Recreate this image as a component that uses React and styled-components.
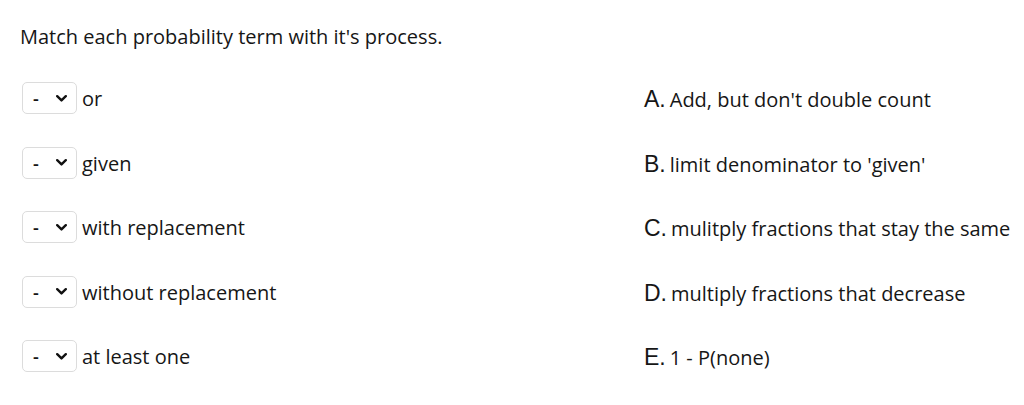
import React from "react";
import styled, { createGlobalStyle } from "styled-components";

const Global = createGlobalStyle`
  html, body { margin: 0; padding: 0; background: #fff; }
  body { font-family: "Open Sans", sans-serif; color: #161616; }
`;

const Page = styled.div`
  padding: 23px 0 0 20px;
`;

const Title = styled.div`
  font-size: 20px;
  line-height: 28px;
  margin-bottom: 31px;
`;

const Grid = styled.div`
  display: grid;
  grid-template-columns: 622px auto;
  grid-auto-rows: 64.5px;
  margin-left: 2px;
`;

const Left = styled.div`
  display: flex;
  align-items: flex-start;
  gap: 5px;
  font-size: 20px;
`;

const SelectBox = styled.div`
  width: 55px;
  height: 32px;
  box-sizing: border-box;
  border: 1px solid #dcdcdc;
  border-radius: 5px;
  display: flex;
  align-items: center;
  justify-content: space-between;
  padding: 0 9px 0 10px;
  font-size: 18px;
`;

const Dash = styled.span`
  font-weight: 600;
  line-height: 1;
`;

const Label = styled.span`
  line-height: 34px;
`;

const Right = styled.div`
  display: flex;
  align-items: baseline;
  gap: 4px;
  font-size: 20px;
  line-height: 32px;
  margin-top: 1px;
`;

const Letter = styled.span`
  font-family: "Liberation Sans", Arial, sans-serif;
  font-size: 23px;
`;

const Chevron = () => (
  <svg width="11" height="7" viewBox="0 0 11 7">
    <path d="M1.2 1.2 L5.5 5.4 L9.8 1.2" fill="none" stroke="#111" strokeWidth="2.4" strokeLinecap="round" strokeLinejoin="round" />
  </svg>
);

const terms = ["or", "given", "with replacement", "without replacement", "at least one"];
const answers = [
  ["A.", "Add, but don't double count"],
  ["B.", "limit denominator to 'given'"],
  ["C.", "mulitply fractions that stay the same"],
  ["D.", "multiply fractions that decrease"],
  ["E.", "1 - P(none)"],
];

export default function App() {
  return (
    <Page>
      <Global />
      <Title>Match each probability term with it's process.</Title>
      <Grid>
        {terms.map((t, i) => (
          <React.Fragment key={t}>
            <Left>
              <SelectBox>
                <Dash>-</Dash>
                <Chevron />
              </SelectBox>
              <Label>{t}</Label>
            </Left>
            <Right>
              <Letter>{answers[i][0]}</Letter>
              <span>{answers[i][1]}</span>
            </Right>
          </React.Fragment>
        ))}
      </Grid>
    </Page>
  );
}
